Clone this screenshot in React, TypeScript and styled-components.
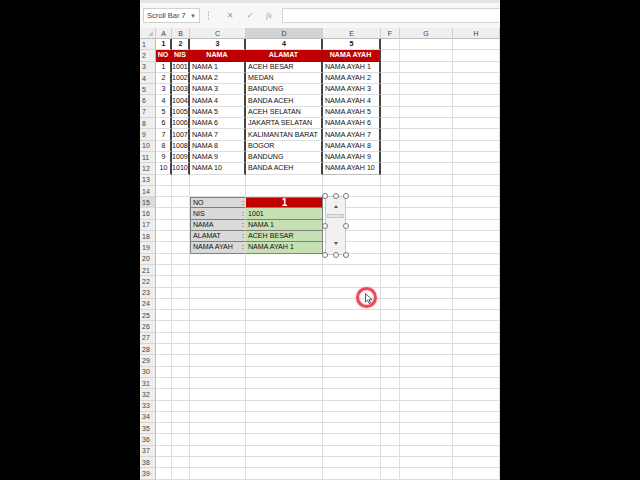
import React from "react";
import styled, { createGlobalStyle } from "styled-components";

const Global = createGlobalStyle`
  html, body { margin: 0; padding: 0; background: #000; }
  body { font-family: "Liberation Sans", Arial, sans-serif; }
`;

const Page = styled.div`
  width: 640px;
  height: 480px;
  background: #000;
  display: flex;
  justify-content: center;
  overflow: hidden;
`;

const Sheet = styled.div`
  position: relative;
  width: 360px;
  height: 480px;
  background: #fff;
  overflow: hidden;
  display: flex;
  flex-direction: column;
`;

const Toolbar = styled.div`
  height: 28px;
  box-sizing: border-box;
  border-top: 3px solid #e4e4e4;
  background: #f7f7f7;
  display: flex;
  align-items: flex-start;
  padding: 5px 0 0 3px;
`;

const NameBox = styled.div`
  width: 57px;
  height: 15px;
  box-sizing: border-box;
  background: #fff;
  border: 1px solid #d0d0d0;
  display: flex;
  align-items: center;
  justify-content: space-between;
  padding: 0 3px 0 3px;
  font-size: 7.5px;
  color: #444;
`;

const Caret = styled.span`
  font-size: 6px;
  color: #666;
`;

const Grip = styled.div`
  width: 2px;
  height: 9px;
  margin: 3px 9px 0 8px;
  border-left: 1px dotted #aaa;
`;

const FxIcon = styled.span<{ $w: number; $italic?: boolean }>`
  width: ${(p) => p.$w}px;
  height: 15px;
  display: flex;
  align-items: center;
  justify-content: center;
  font-size: 8px;
  color: #9a9a9a;
  font-style: ${(p) => (p.$italic ? "italic" : "normal")};
  font-family: ${(p) => (p.$italic ? '"Liberation Serif", serif' : '"DejaVu Sans", sans-serif')};
`;

const FormulaInput = styled.div`
  flex: 1;
  height: 15px;
  margin-left: 4px;
  box-sizing: border-box;
  background: #fff;
  border: 1px solid #d4d4d4;
  border-right: none;
`;

const Grid = styled.div`
  display: grid;
  grid-template-columns: 16px 16px 18px 56px 77px 58px 19px 53px 47px;
  grid-template-rows: 11px;
  grid-auto-rows: 11.3px;
  font-family: "Liberation Sans", Arial, sans-serif;
`;

const ColHead = styled.div<{ $active?: boolean }>`
  background: ${(p) => (p.$active ? "#d3d3d3" : "#efefef")};
  border-right: 1px solid #cfcfcf;
  border-bottom: 1px solid #bdbdbd;
  box-sizing: border-box;
  display: flex;
  align-items: center;
  justify-content: center;
  font-size: 7px;
  color: #444;
`;

const Corner = styled.div`
  background: #efefef;
  border-right: 1px solid #cfcfcf;
  border-bottom: 1px solid #bdbdbd;
  box-sizing: border-box;
  position: relative;
  &::after {
    content: "";
    position: absolute;
    right: 2px;
    bottom: 2px;
    border-left: 5px solid transparent;
    border-bottom: 5px solid #c4c4c4;
  }
`;

const RowHead = styled.div<{ $active?: boolean }>`
  background: ${(p) => (p.$active ? "#dcdcdc" : "#efefef")};
  border-right: 1px solid #bdbdbd;
  border-bottom: 1px solid #d6d6d6;
  box-sizing: border-box;
  display: flex;
  align-items: center;
  padding-left: 2px;
  font-size: 7px;
  color: #444;
`;

type CellProps = {
  $bg?: string;
  $color?: string;
  $bold?: boolean;
  $align?: "left" | "center" | "right" | "between";
  $br?: string;
  $bb?: string;
  $size?: number;
  $pad?: number;
};

const Cell = styled.div<CellProps>`
  background: ${(p) => p.$bg || "#fff"};
  color: ${(p) => p.$color || "#111"};
  font-weight: ${(p) => (p.$bold ? 700 : 400)};
  font-size: ${(p) => p.$size || 7.1}px;
  border-right: ${(p) => p.$br || "1px solid #dedede"};
  border-bottom: ${(p) => p.$bb || "1px solid #dedede"};
  box-sizing: border-box;
  display: flex;
  align-items: center;
  justify-content: ${(p) =>
    p.$align === "center"
      ? "center"
      : p.$align === "right"
      ? "flex-end"
      : p.$align === "between"
      ? "space-between"
      : "flex-start"};
  padding: 0 1px 0 ${(p) => (p.$pad ?? 2)}px;
  white-space: nowrap;
  overflow: hidden;
`;

const ScrollCtrl = styled.div`
  position: absolute;
  left: 185px;
  top: 196px;
  width: 21px;
  height: 59px;
  box-sizing: border-box;
  background: #f1f1f1;
  border: 1px solid #c9c9c9;
  display: flex;
  flex-direction: column;
  align-items: center;
`;

const Arrow = styled.div<{ $down?: boolean }>`
  margin-top: ${(p) => (p.$down ? "auto" : "8px")};
  margin-bottom: ${(p) => (p.$down ? "9px" : "0")};
  width: 0;
  height: 0;
  border-left: 2.5px solid transparent;
  border-right: 2.5px solid transparent;
  ${(p) =>
    p.$down ? "border-top: 3px solid #555;" : "border-bottom: 3px solid #555;"}
`;

const Thumb = styled.div`
  margin-top: 6px;
  width: 17px;
  height: 4px;
  box-sizing: border-box;
  border: 1px solid #c4c4c4;
  background: #e4e4e4;
`;

const Handle = styled.div`
  position: absolute;
  width: 6px;
  height: 6px;
  margin: -3px 0 0 -3px;
  border-radius: 50%;
  background: #fff;
  border: 1px solid #777;
  box-sizing: border-box;
`;

const Cursor = styled.div`
  position: absolute;
  left: 216px;
  top: 287px;
  width: 21px;
  height: 21px;
  box-sizing: border-box;
  border-radius: 50%;
  border: 3px solid #ea4a5c;
  box-shadow: 0 0 2px rgba(232, 52, 74, 0.5), inset 0 0 2px rgba(232, 52, 74, 0.5);
`;

const Pointer = styled.svg`
  position: absolute;
  left: 6px;
  top: 3px;
`;

const COLS = ["A", "B", "C", "D", "E", "F", "G", "H"];

const DATA = [
  "ACEH BESAR",
  "MEDAN",
  "BANDUNG",
  "BANDA ACEH",
  "ACEH SELATAN",
  "JAKARTA SELATAN",
  "KALIMANTAN BARAT",
  "BOGOR",
  "BANDUNG",
  "BANDA ACEH",
].map((a, i) => ({
  no: String(i + 1),
  nis: String(1001 + i),
  nama: `NAMA ${i + 1}`,
  alamat: a,
  ayah: `NAMA AYAH ${i + 1}`,
}));

const FORM = [
  ["NIS", "1001"],
  ["NAMA", "NAMA 1"],
  ["ALAMAT", "ACEH BESAR"],
  ["NAMA AYAH", "NAMA AYAH 1"],
];

const DARK = "2px solid #444";
const FORM_B = "1px solid #7f7f7f";

function Blank({ n }: { n: number }) {
  return (
    <>
      {Array.from({ length: n }).map((_, i) => (
        <Cell key={i} />
      ))}
    </>
  );
}

function renderRow(r: number) {
  const cells: React.ReactNode[] = [];
  cells.push(
    <RowHead key="h" $active={r === 15}>
      {r}
    </RowHead>
  );
  if (r === 1) {
    ["1", "2", "3", "4", "5"].forEach((t, i) =>
      cells.push(
        <Cell key={i} $bold $align="center" $br={DARK}>
          {t}
        </Cell>
      )
    );
    cells.push(<Blank key="b" n={3} />);
  } else if (r === 2) {
    ["NO", "NIS", "NAMA", "ALAMAT", "NAMA AYAH"].forEach((t, i) =>
      cells.push(
        <Cell
          key={i}
          $bold
          $align="center"
          $pad={0}
          $bg="#c00000"
          $color="#fff"
          $br={i === 4 ? DARK : "1px solid #a50000"}
          $bb="1px solid #a50000"
        >
          {t}
        </Cell>
      )
    );
    cells.push(<Blank key="b" n={3} />);
  } else if (r >= 3 && r <= 12) {
    const d = DATA[r - 3];
    cells.push(
      <Cell key="a" $align="center" $br={DARK}>
        {d.no}
      </Cell>,
      <Cell key="b" $br={DARK} $pad={0}>
        {d.nis}
      </Cell>,
      <Cell key="c" $br={DARK}>
        {d.nama}
      </Cell>,
      <Cell key="d" $br={DARK}>
        {d.alamat}
      </Cell>,
      <Cell key="e" $br={DARK} $bb={r === 12 ? "1px solid #bbb" : undefined}>
        {d.ayah}
      </Cell>,
      <Blank key="x" n={3} />
    );
  } else if (r === 15) {
    cells.push(
      <Blank key="x" n={2} />,
      <Cell key="c" $bg="#d9d9d9" $align="between" $bb={FORM_B} style={{ borderTop: FORM_B, borderLeft: FORM_B }}>
        <span>NO</span>
        <span>:</span>
      </Cell>,
      <Cell key="d" $bg="#c00000" $color="#fff" $bold $size={10} $align="center" $bb={FORM_B} $br={FORM_B} style={{ borderTop: FORM_B }}>
        1
      </Cell>,
      <Blank key="y" n={4} />
    );
  } else if (r >= 16 && r <= 19) {
    const f = FORM[r - 16];
    cells.push(
      <Blank key="x" n={2} />,
      <Cell key="c" $bg="#d9d9d9" $align="between" $bb={FORM_B} style={{ borderLeft: FORM_B }}>
        <span>{f[0]}</span>
        <span>:</span>
      </Cell>,
      <Cell key="d" $bg="#c6e0b4" $bb={FORM_B} $br={FORM_B}>
        {f[1]}
      </Cell>,
      <Blank key="y" n={4} />
    );
  } else {
    cells.push(<Blank key="b" n={8} />);
  }
  return <React.Fragment key={r}>{cells}</React.Fragment>;
}

const HANDLES: [number, number][] = [
  [0, 0],
  [10.5, 0],
  [21, 0],
  [0, 30],
  [21, 30],
  [0, 59],
  [10.5, 59],
  [21, 59],
];

export default function App() {
  return (
    <Page>
      <Global />
      <Sheet>
        <Toolbar>
          <NameBox>
            <span>Scroll Bar 7</span>
            <Caret>▼</Caret>
          </NameBox>
          <Grip />
          <FxIcon $w={20}>✕</FxIcon>
          <FxIcon $w={20}>✓</FxIcon>
          <FxIcon $w={18} $italic>
            fx
          </FxIcon>
          <FormulaInput />
        </Toolbar>
        <Grid>
          <Corner />
          {COLS.map((c) => (
            <ColHead key={c} $active={c === "D"}>
              {c}
            </ColHead>
          ))}
          {Array.from({ length: 39 }).map((_, i) => renderRow(i + 1))}
        </Grid>
        <ScrollCtrl>
          <Arrow />
          <Thumb />
          <Arrow $down />
        </ScrollCtrl>
        {HANDLES.map(([x, y], i) => (
          <Handle key={i} style={{ left: 185 + x, top: 196 + y }} />
        ))}
        <Cursor>
          <Pointer width="8" height="11" viewBox="0 0 8 11">
            <path d="M0.5 0.5 L0.5 9 L2.6 7 L4.2 10.5 L5.6 9.8 L4.1 6.6 L7 6.6 Z" fill="#fff" stroke="#333" strokeWidth="0.8" />
          </Pointer>
        </Cursor>
      </Sheet>
    </Page>
  );
}
